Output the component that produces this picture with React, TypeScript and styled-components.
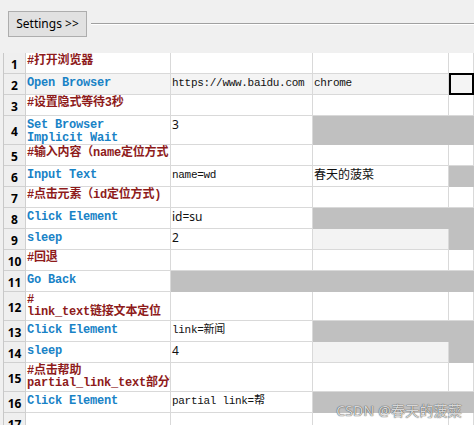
import React from "react";
import styled, { createGlobalStyle, css } from "styled-components";

const Global = createGlobalStyle`
  html, body { margin: 0; padding: 0; background: #f0f0f0; }
  body { width: 474px; height: 425px; overflow: hidden; }
`;

const Page = styled.div`
  position: relative;
  width: 474px;
  height: 425px;
  overflow: hidden;
  background: #f0f0f0;
  display: flex;
  flex-direction: column;
`;

const TopBar = styled.div`
  height: 53px;
  flex-shrink: 0;
  display: flex;
  align-items: flex-start;
  padding: 11px 0 0 8px;
  box-sizing: border-box;
  gap: 4px;
`;

const SettingsButton = styled.button`
  width: 79px;
  height: 26px;
  box-sizing: border-box;
  border: 1px solid #adadad;
  background: #e1e1e1;
  font-family: "Noto Sans", "Open Sans", sans-serif;
  font-size: 12px;
  color: #000;
  padding: 0 0 1px 0;
  margin: 0;
`;

const Rule = styled.div`
  flex: 1;
  margin-top: 12px;
  height: 0;
  border-top: 1px solid #a0a0a0;
  border-bottom: 1px solid #ffffff;
`;

const Table = styled.div`
  margin-left: 3px;
  border-left: 1px solid #c8c8c8;
  display: flex;
  flex-direction: column;
  background: #ffffff;
  flex: 1;
  min-height: 0;
  overflow: hidden;
`;

const Row = styled.div<{ $tall?: boolean; $active?: boolean }>`
  display: grid;
  grid-template-columns: 22px 145px 142px 136px 1fr;
  height: ${(p) => (p.$tall ? 29 : 21)}px;
  background: ${(p) => (p.$active ? "#f4f4f4" : "#ffffff")};
  flex-shrink: 0;
`;

type Tone = "plain" | "gray" | "light" | "selected";

const Cell = styled.div<{ $tone?: Tone }>`
  box-sizing: border-box;
  border-right: 1px solid #d9d9d9;
  border-bottom: 1px solid #d9d9d9;
  overflow: hidden;
  padding: 2px 0 0 1px;
  white-space: nowrap;
  ${(p) =>
    p.$tone === "gray" &&
    css`
      background: #c0c0c0;
      border-color: #c0c0c0;
    `}
  ${(p) =>
    p.$tone === "light" &&
    css`
      background: #f3f3f3;
    `}
  ${(p) =>
    p.$tone === "selected" &&
    css`
      border: 2px solid #000;
      margin: -1px 0 0 0;
    `}
`;

const NumCell = styled.div`
  box-sizing: border-box;
  border-right: 1px solid #d0d0d0;
  border-bottom: 1px solid #d0d0d0;
  background: #efefef;
  display: flex;
  align-items: center;
  justify-content: center;
  padding-top: 2px;
  font-family: "Noto Sans", "Open Sans", sans-serif;
  font-weight: 700;
  font-size: 12px;
  color: #000;
`;

const Line = styled.div<{ $kind: "kw" | "comment" | "mono" | "sans" }>`
  line-height: 12px;
  height: 12px;
  white-space: nowrap;
  ${(p) =>
    p.$kind === "kw" &&
    css`
      font-family: "Liberation Mono", "Noto Sans CJK SC", monospace;
      font-weight: 700;
      font-size: 12px;
      letter-spacing: -0.2px;
      color: #1882c6;
      padding-top: 1px;
    `}
  ${(p) =>
    p.$kind === "comment" &&
    css`
      font-family: "Liberation Mono", "Noto Sans CJK SC", monospace;
      font-weight: 700;
      font-size: 12px;
      letter-spacing: -0.2px;
      color: #8e1b1b;
    `}
  ${(p) =>
    p.$kind === "mono" &&
    css`
      font-family: "Liberation Mono", "Noto Sans CJK SC", monospace;
      font-size: 11px;
      letter-spacing: -0.3px;
      color: #111;
      padding-top: 1px;
    `}
  ${(p) =>
    p.$kind === "sans" &&
    css`
      font-family: "Noto Sans", "Noto Sans CJK SC", sans-serif;
      font-size: 12px;
      color: #111;
      padding-top: 1px;
    `}
`;

const Watermark = styled.div`
  position: absolute;
  right: 12px;
  bottom: 5px;
  font-family: "Noto Sans", "Noto Sans CJK SC", sans-serif;
  font-size: 14px;
  color: rgba(236, 236, 236, 0.9);
  text-shadow: 0 0 1px rgba(50, 50, 50, 0.9), 0 0 1px rgba(50, 50, 50, 0.6);
  letter-spacing: 0.2px;
`;

type Content = { kind: "kw" | "comment" | "mono" | "sans"; lines: string[] } | null;

type RowData = {
  tall?: boolean;
  active?: boolean;
  c2: Content;
  c3: Content;
  c4: Content;
  tones: [Tone, Tone, Tone];
};

const kw = (...lines: string[]): Content => ({ kind: "kw", lines });
const cm = (...lines: string[]): Content => ({ kind: "comment", lines });
const mo = (...lines: string[]): Content => ({ kind: "mono", lines });
const sa = (...lines: string[]): Content => ({ kind: "sans", lines });

const rows: RowData[] = [
  { c2: cm("#打开浏览器"), c3: null, c4: null, tones: ["plain", "plain", "plain"] },
  {
    active: true,
    c2: kw("Open Browser"),
    c3: mo("https://www.baidu.com"),
    c4: mo("chrome"),
    tones: ["plain", "plain", "selected"],
  },
  { c2: cm("#设置隐式等待3秒"), c3: null, c4: null, tones: ["plain", "plain", "plain"] },
  {
    tall: true,
    c2: kw("Set Browser", "Implicit Wait"),
    c3: sa("3"),
    c4: null,
    tones: ["plain", "gray", "gray"],
  },
  { c2: cm("#输入内容（name定位方式)"), c3: null, c4: null, tones: ["plain", "plain", "plain"] },
  { c2: kw("Input Text"), c3: mo("name=wd"), c4: sa("春天的菠菜"), tones: ["plain", "plain", "gray"] },
  { c2: cm("#点击元素（id定位方式)"), c3: null, c4: null, tones: ["plain", "plain", "plain"] },
  { c2: kw("Click Element"), c3: sa("id=su"), c4: null, tones: ["plain", "gray", "gray"] },
  { c2: kw("sleep"), c3: sa("2"), c4: null, tones: ["plain", "light", "gray"] },
  { c2: cm("#回退"), c3: null, c4: null, tones: ["plain", "plain", "plain"] },
  { c2: kw("Go Back"), c3: null, c4: null, tones: ["gray", "gray", "gray"] },
  { tall: true, c2: cm("#", "link_text链接文本定位"), c3: null, c4: null, tones: ["plain", "plain", "plain"] },
  { c2: kw("Click Element"), c3: mo("link=新闻"), c4: null, tones: ["plain", "gray", "gray"] },
  { c2: kw("sleep"), c3: sa("4"), c4: null, tones: ["plain", "light", "gray"] },
  {
    tall: true,
    c2: cm("#点击帮助", "partial_link_text部分链接文本定位"),
    c3: null,
    c4: null,
    tones: ["plain", "plain", "plain"],
  },
  { c2: kw("Click Element"), c3: mo("partial link=帮"), c4: null, tones: ["plain", "gray", "gray"] },
  { c2: null, c3: null, c4: null, tones: ["plain", "plain", "plain"] },
];

const renderContent = (c: Content) =>
  c ? c.lines.map((l, i) => (
    <Line key={i} $kind={c.kind}>
      {l}
    </Line>
  )) : null;

export default function App() {
  return (
    <>
      <Global />
      <Page>
        <TopBar>
          <SettingsButton>Settings &gt;&gt;</SettingsButton>
          <Rule />
        </TopBar>
        <Table>
          {rows.map((r, i) => (
            <Row key={i} $tall={r.tall} $active={r.active}>
              <NumCell>{i + 1}</NumCell>
              <Cell>{renderContent(r.c2)}</Cell>
              <Cell $tone={r.tones[0]}>{renderContent(r.c3)}</Cell>
              <Cell $tone={r.tones[1]}>{renderContent(r.c4)}</Cell>
              <Cell $tone={r.tones[2]} />
            </Row>
          ))}
        </Table>
        <Watermark>CSDN @春天的菠菜</Watermark>
      </Page>
    </>
  );
}
